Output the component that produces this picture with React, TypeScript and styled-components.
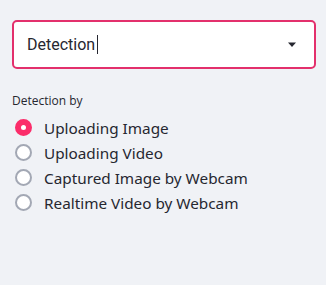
import React, { useState } from 'react';
import styled, { createGlobalStyle } from 'styled-components';

const GlobalStyle = createGlobalStyle`
  html, body {
    margin: 0;
    padding: 0;
    background: #f0f2f6;
  }
`;

const options = [
  'Uploading Image',
  'Uploading Video',
  'Captured Image by Webcam',
  'Realtime Video by Webcam',
];

export default function App() {
  const [selected, setSelected] = useState(0);
  return (
    <Sidebar>
      <GlobalStyle />
      <SelectBox>
        <SelectText>
          Detection<Caret />
        </SelectText>
        <svg width="10" height="6" viewBox="0 0 10 6">
          <path d="M1 0.5 L9 0.5 L5 5 Z" fill="#262730" />
        </svg>
      </SelectBox>
      <GroupLabel>Detection by</GroupLabel>
      <RadioList>
        {options.map((o, i) => (
          <RadioRow key={o} onClick={() => setSelected(i)}>
            <RadioDot $checked={i === selected} />
            <RadioText>{o}</RadioText>
          </RadioRow>
        ))}
      </RadioList>
    </Sidebar>
  );
}

const Sidebar = styled.div`
  width: 326px;
  height: 285px;
  box-sizing: border-box;
  padding: 20px 10px 0 12px;
  background: #f0f2f6;
  display: flex;
  flex-direction: column;
`;

const SelectBox = styled.div`
  height: 49px;
  box-sizing: border-box;
  border: 2px solid #e3306c;
  border-radius: 5px;
  background: #ffffff;
  display: flex;
  align-items: center;
  justify-content: space-between;
  padding: 0 17px 0 13px;
`;

const SelectText = styled.div`
  font-family: Roboto, "Liberation Sans", sans-serif;
  font-size: 16px;
  color: #262730;
  display: flex;
  align-items: center;
`;

const Caret = styled.span`
  display: inline-block;
  width: 1px;
  height: 19px;
  background: #262730;
  margin-left: 2px;
`;

const GroupLabel = styled.div`
  margin-top: 23px;
  font-family: "Open Sans", "Liberation Sans", sans-serif;
  font-size: 12px;
  color: #262730;
`;

const RadioList = styled.div`
  margin-top: 6px;
  display: flex;
  flex-direction: column;
`;

const RadioRow = styled.label`
  height: 25px;
  display: flex;
  align-items: center;
  cursor: pointer;
`;

const RadioDot = styled.span<{ $checked: boolean }>`
  width: 17px;
  height: 17px;
  box-sizing: border-box;
  border-radius: 50%;
  margin-left: 3px;
  background: #ffffff;
  border: ${(p) => (p.$checked ? '6px solid #fb2d6a' : '2px solid #a3a8b4')};
`;

const RadioText = styled.span`
  margin-left: 12px;
  font-family: "Noto Sans", "Open Sans", sans-serif;
  font-size: 15.3px;
  color: #262730;
`;
